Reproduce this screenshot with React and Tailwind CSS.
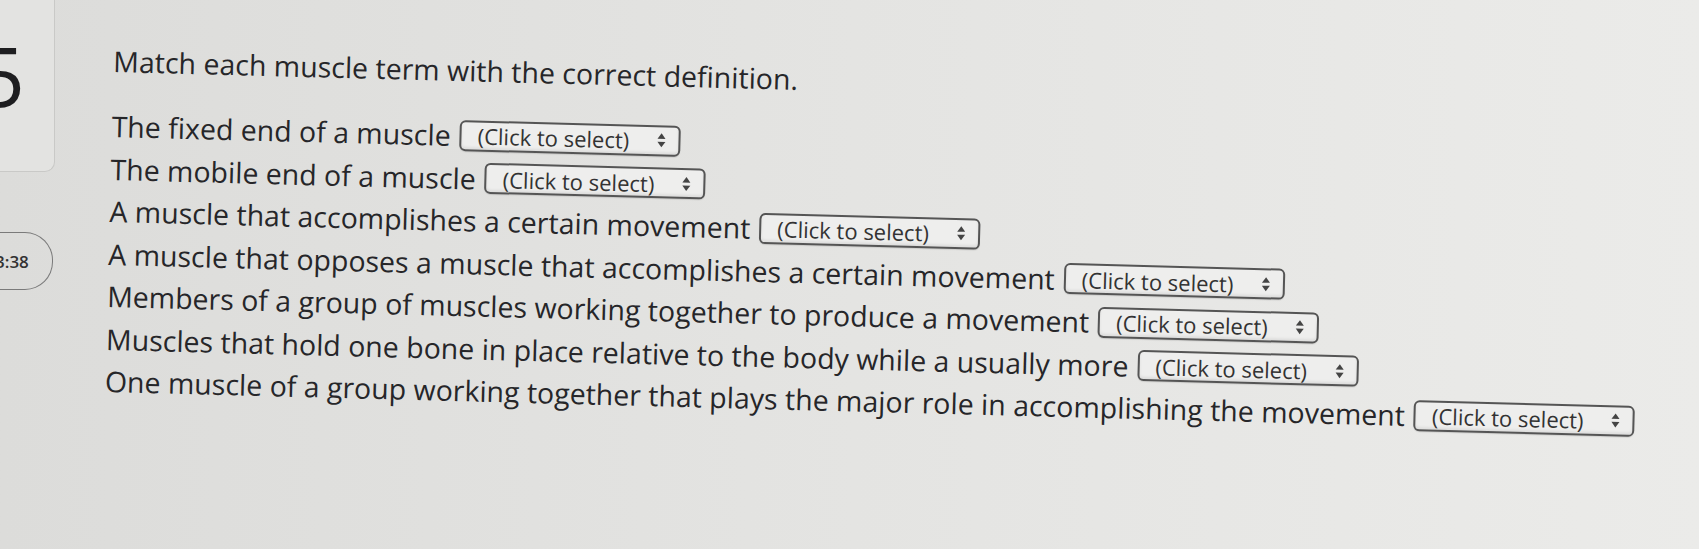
import React from "react";

const rows = [
  "The fixed end of a muscle",
  "The mobile end of a muscle",
  "A muscle that accomplishes a certain movement",
  "A muscle that opposes a muscle that accomplishes a certain movement",
  "Members of a group of muscles working together to produce a movement",
  "Muscles that hold one bone in place relative to the body while a usually more",
  "One muscle of a group working together that plays the major role in accomplishing the movement",
];

function Select() {
  return (
    <div className="flex items-center justify-between w-[221px] h-[31px] shrink-0 rounded-[6px] border-2 border-[#555555] bg-[#eeeeed] pl-[16px] pr-[12px] shadow-[inset_0_-2px_3px_rgba(0,0,0,0.08),0_1px_1px_rgba(0,0,0,0.1)] text-[22px] text-[#333333] leading-none">
      <span>(Click to select)</span>
      <svg width="10" height="16" viewBox="0 0 10 16">
        <path d="M5 1 L9 6.5 H1 Z" fill="#444444" />
        <path d="M5 15 L9 9.5 H1 Z" fill="#444444" />
      </svg>
    </div>
  );
}

export default function App() {
  return (
    <div className="w-[1699px] h-[549px] overflow-hidden bg-linear-to-r from-[#dcdcda] via-[#e4e4e2] to-[#ebebe9] flex font-['Open_Sans',sans-serif] text-[#262629]">
      <aside className="w-[114px] shrink-0 flex flex-col items-start">
        <div className="w-[55px] h-[172px] border border-l-0 border-t-0 border-[#c9c9c7] rounded-br-[10px] overflow-hidden bg-[#e3e3e1]">
          <div className="ml-[-22px] mt-[34px] text-[82px] leading-none font-medium text-[#1e1e20]">5</div>
        </div>
        <div className="mt-[60px] w-[53px] h-[58px] border-[1.5px] border-l-0 border-[#7a7a7a] rounded-r-[28px] overflow-hidden flex items-center">
          <span className="ml-[-5px] text-[17px] font-semibold text-[#333333] leading-none">3:38</span>
        </div>
      </aside>
      <main className="mt-[37px] origin-top-left rotate-[1.5deg]">
        <div className="h-[48px] flex items-center text-[28.5px] leading-none whitespace-nowrap">Match each muscle term with the correct definition.</div>
        <div className="mt-[20px] flex flex-col">
          {rows.map((r) => (
            <div key={r} className="h-[42.5px] flex items-center gap-[9px] text-[28.5px] leading-none whitespace-nowrap">
              <span>{r}</span>
              <Select />
            </div>
          ))}
        </div>
      </main>
    </div>
  );
}
